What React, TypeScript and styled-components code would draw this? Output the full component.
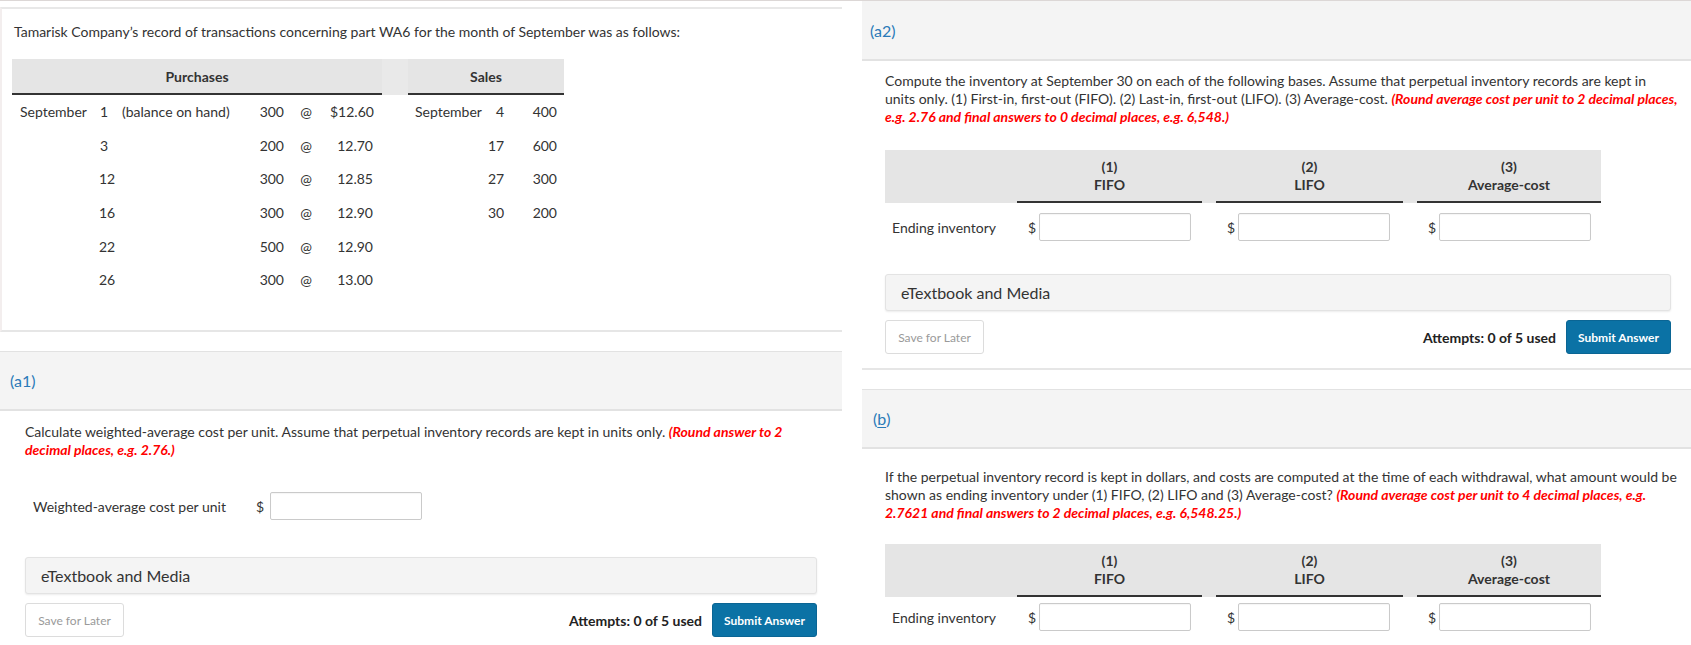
import styled, { createGlobalStyle } from "styled-components"

const GlobalStyle = createGlobalStyle`
  html, body {
    margin: 0;
    padding: 0;
    background: #ffffff;
    overflow: hidden;
  }
  body {
    font-family: Lato, "Open Sans", "Liberation Sans", Arial, sans-serif;
    font-size: 14px;
    color: #333333;
  }
  * {
    box-sizing: border-box;
  }
`

const Page = styled.div`
  display: flex;
  gap: 20px;
  width: 1691px;
  height: 645px;
  overflow: hidden;
  border-top: 1px solid #dcd7d6;
`

const Column = styled.div<{ $width?: number }>`
  display: flex;
  flex-direction: column;
  flex: ${({ $width }) => ($width ? `0 0 ${$width}px` : "1 1 auto")};
  min-width: 0;
`

const Problem = styled.section`
  margin-top: 6px;
  border-top: 2px solid #e8e8e8;
  border-bottom: 2px solid #e6e6e6;
  border-left: 2px solid #f3eeee;
  padding: 13px 12px 0 10px;
  height: 325px;
`

const Intro = styled.p`
  margin: 0 0 0 2px;
  font-size: 14px;
  line-height: 20px;
`

const LedgerTable = styled.table`
  margin-top: 17px;
  border-collapse: separate;
  border-spacing: 0;
  table-layout: fixed;
  width: 552px;
`

const Col = styled.col<{ $w: number }>`
  width: ${({ $w }) => $w}px;
`

const LedgerHead = styled.th<{ $blank?: boolean }>`
  height: 36px;
  padding: 0;
  font-weight: 700;
  font-size: 14px;
  text-align: center;
  background: ${({ $blank }) => ($blank ? "#e9e9e9" : "#e5e5e5")};
  border-bottom: 2px solid ${({ $blank }) => ($blank ? "#e9e9e9" : "#333333")};
`

const LedgerCell = styled.td<{ $align?: "left" | "right" | "center"; $pad?: number }>`
  height: 33.6px;
  padding: 0 ${({ $pad }) => $pad ?? 7}px;
  text-align: ${({ $align }) => $align ?? "left"};
  white-space: nowrap;
  font-size: 14px;
  vertical-align: middle;
`

const Part = styled.section<{ $gap?: number; $closed?: boolean }>`
  margin-top: ${({ $gap }) => $gap ?? 0}px;
  border-bottom: ${({ $closed }) => ($closed ? "2px solid #e6e6e6" : "none")};
  padding-bottom: ${({ $closed }) => ($closed ? 14 : 0)}px;
`

const PartHeader = styled.div<{ $top?: boolean; $indent?: number }>`
  height: 60px;
  display: flex;
  align-items: center;
  padding-left: ${({ $indent }) => $indent ?? 10}px;
  background: #f4f4f4;
  border-top: ${({ $top }) => ($top ? "1px solid #e2e2e2" : "none")};
  border-bottom: 2px solid #e2e2e2;
  font-size: 16px;
  color: #2a7ab8;
`

const PartLink = styled.span`
  text-decoration: underline;
  text-underline-offset: 2px;
`

const PartBody = styled.div<{ $left: number; $right: number; $top?: number }>`
  padding: ${({ $top }) => $top ?? 12}px ${({ $right }) => $right}px 0 ${({ $left }) => $left}px;
`

const Question = styled.p`
  margin: 0;
  font-size: 14px;
  line-height: 18px;
  white-space: nowrap;
`

const Hint = styled.em`
  color: #ff0000;
  font-weight: 700;
  font-style: italic;
`

const AnswerRow = styled.div`
  display: flex;
  align-items: center;
  margin-top: 33px;
`

const AnswerLabel = styled.span`
  width: 231px;
  padding-left: 8px;
  font-size: 14px;
`

const Dollar = styled.span<{ $w?: number }>`
  width: ${({ $w }) => $w ?? 14}px;
  font-size: 14px;
`

const AnswerInput = styled.input`
  width: 152px;
  height: 28px;
  border: 1px solid #cacaca;
  border-radius: 2px;
  background: #ffffff;
  box-shadow: inset 0 1px 1px rgba(0, 0, 0, 0.04);
  padding: 0 6px;
  font: inherit;
`

const MethodTable = styled.table<{ $gap: number }>`
  margin-top: ${({ $gap }) => $gap}px;
  border-collapse: separate;
  border-spacing: 0;
  table-layout: fixed;
  width: 716px;
`

const MethodHead = styled.th<{ $method?: boolean }>`
  padding: 8px 0 7px;
  background: #e5e5e5;
  font-size: 14px;
  font-weight: 700;
  line-height: 18px;
  text-align: center;
  border-bottom: 2px solid ${({ $method }) => ($method ? "#333333" : "#e5e5e5")};
`

const MethodCell = styled.td<{ $pad: number }>`
  padding: ${({ $pad }) => $pad}px 0 10px;
  vertical-align: middle;
`

const RowLabel = styled.span`
  padding-left: 7px;
  font-size: 14px;
  white-space: nowrap;
`

const Amount = styled.div`
  display: flex;
  align-items: center;
  padding-left: 11px;
`

const MediaBox = styled.div<{ $gap: number }>`
  margin-top: ${({ $gap }) => $gap}px;
  height: 37px;
  display: flex;
  align-items: center;
  padding-left: 15px;
  background: #f4f4f4;
  border: 1px solid #e3e3e3;
  border-radius: 3px;
  box-shadow: 0 1px 2px rgba(0, 0, 0, 0.08);
  font-size: 16px;
`

const Actions = styled.div`
  display: flex;
  align-items: center;
  margin-top: 9px;
`

const SaveButton = styled.button`
  width: 99px;
  height: 34px;
  background: #ffffff;
  border: 1px solid #dcdcdc;
  border-radius: 3px;
  color: #9a9a9a;
  font-family: inherit;
  font-size: 12px;
`

const Attempts = styled.span`
  margin-left: auto;
  margin-right: 10px;
  font-size: 14px;
  font-weight: 700;
  color: #222222;
`

const SubmitButton = styled.button`
  width: 105px;
  height: 34px;
  background: #0b72a5;
  border: 1px solid #0a6594;
  border-radius: 3px;
  color: #ffffff;
  font-family: inherit;
  font-size: 12px;
  font-weight: 700;
`

type Purchase = { month?: string; day: string; note?: string; qty: string; price: string }
type Sale = { month?: string; day: string; qty: string }

const purchases: Purchase[] = [
  { month: "September", day: "1", note: "(balance on hand)", qty: "300", price: "$12.60" },
  { day: "3", qty: "200", price: "12.70" },
  { day: "12", qty: "300", price: "12.85" },
  { day: "16", qty: "300", price: "12.90" },
  { day: "22", qty: "500", price: "12.90" },
  { day: "26", qty: "300", price: "13.00" },
]

const sales: Sale[] = [
  { month: "September", day: "4", qty: "400" },
  { day: "17", qty: "600" },
  { day: "27", qty: "300" },
  { day: "30", qty: "200" },
]

const methods = [
  { n: "(1)", name: "FIFO" },
  { n: "(2)", name: "LIFO" },
  { n: "(3)", name: "Average-cost" },
]

const Ledger = () => (
  <LedgerTable>
    <colgroup>
      <Col $w={80} />
      <Col $w={23} />
      <Col $w={124} />
      <Col $w={52} />
      <Col $w={30} />
      <Col $w={61} />
      <Col $w={26} />
      <Col $w={73} />
      <Col $w={30} />
      <Col $w={13} />
      <Col $w={40} />
    </colgroup>
    <thead>
      <tr>
        <LedgerHead colSpan={6}>Purchases</LedgerHead>
        <LedgerHead $blank />
        <LedgerHead colSpan={4}>Sales</LedgerHead>
      </tr>
    </thead>
    <tbody>
      {purchases.map((p, i) => {
        const s = sales[i]
        return (
          <tr key={p.day}>
            <LedgerCell $pad={8}>{p.month}</LedgerCell>
            <LedgerCell $align="right" $pad={7}>{p.day}</LedgerCell>
            <LedgerCell>{p.note}</LedgerCell>
            <LedgerCell $align="right">{p.qty}</LedgerCell>
            <LedgerCell $align="center" $pad={0}>@</LedgerCell>
            <LedgerCell $align="right" $pad={9}>{p.price}</LedgerCell>
            <LedgerCell />
            <LedgerCell>{s?.month}</LedgerCell>
            <LedgerCell $align="right">{s?.day}</LedgerCell>
            <LedgerCell />
            <LedgerCell $align="right">{s?.qty}</LedgerCell>
          </tr>
        )
      })}
    </tbody>
  </LedgerTable>
)

const MethodGrid = ({ gap, rowPad }: { gap: number; rowPad: number }) => (
  <MethodTable $gap={gap}>
    <colgroup>
      <Col $w={132} />
      <Col $w={185} />
      <Col $w={14} />
      <Col $w={187} />
      <Col $w={14} />
      <Col $w={184} />
    </colgroup>
    <thead>
      <tr>
        <MethodHead />
        <MethodHead $method>
          (1)
          <br />
          FIFO
        </MethodHead>
        <MethodHead />
        <MethodHead $method>
          (2)
          <br />
          LIFO
        </MethodHead>
        <MethodHead />
        <MethodHead $method>
          (3)
          <br />
          Average-cost
        </MethodHead>
      </tr>
    </thead>
    <tbody>
      <tr>
        <MethodCell $pad={rowPad}>
          <RowLabel>Ending inventory</RowLabel>
        </MethodCell>
        {methods.map((m, i) => [
          i > 0 ? <MethodCell key={`gap-${m.n}`} $pad={rowPad} /> : null,
          <MethodCell key={m.n} $pad={rowPad}>
            <Amount>
              <Dollar $w={11}>$</Dollar>
              <AnswerInput aria-label={m.name} />
            </Amount>
          </MethodCell>,
        ])}
      </tr>
    </tbody>
  </MethodTable>
)

const Footer = ({ gap }: { gap: number }) => (
  <>
    <MediaBox $gap={gap}>eTextbook and Media</MediaBox>
    <Actions>
      <SaveButton>Save for Later</SaveButton>
      <Attempts>Attempts: 0 of 5 used</Attempts>
      <SubmitButton>Submit Answer</SubmitButton>
    </Actions>
  </>
)

export default function App() {
  return (
    <>
      <GlobalStyle />
      <Page>
        <Column $width={842}>
          <Problem>
            <Intro>
              Tamarisk Company’s record of transactions concerning part WA6 for the month of September was as follows:
            </Intro>
            <Ledger />
          </Problem>
          <Part $gap={19}>
            <PartHeader $top>(a1)</PartHeader>
            <PartBody $left={25} $right={25}>
              <Question>
                Calculate weighted-average cost per unit. Assume that perpetual inventory records are kept in units
                only. <Hint>(Round answer to 2<br />decimal places, e.g. 2.76.)</Hint>
              </Question>
              <AnswerRow>
                <AnswerLabel>Weighted-average cost per unit</AnswerLabel>
                <Dollar>$</Dollar>
                <AnswerInput />
              </AnswerRow>
              <Footer gap={37} />
            </PartBody>
          </Part>
        </Column>
        <Column>
          <Part $closed>
            <PartHeader $indent={8}>(a2)</PartHeader>
            <PartBody $left={23} $right={20} $top={11}>
              <Question>
                Compute the inventory at September 30 on each of the following bases. Assume that perpetual inventory
                records are kept in
                <br />
                units only. (1) First-in, first-out (FIFO). (2) Last-in, first-out (LIFO). (3) Average-cost.{" "}
                <Hint>
                  (Round average cost per unit to 2 decimal places,
                  <br />
                  e.g. 2.76 and final answers to 0 decimal places, e.g. 6,548.)
                </Hint>
              </Question>
              <MethodGrid gap={24} rowPad={10} />
              <Footer gap={23} />
            </PartBody>
          </Part>
          <Part $gap={19}>
            <PartHeader $top $indent={11}>
              (<PartLink>b</PartLink>)
            </PartHeader>
            <PartBody $left={23} $right={20} $top={19}>
              <Question>
                If the perpetual inventory record is kept in dollars, and costs are computed at the time of each
                withdrawal, what amount would be
                <br />
                shown as ending inventory under (1) FIFO, (2) LIFO and (3) Average-cost?{" "}
                <Hint>
                  (Round average cost per unit to 4 decimal places, e.g.
                  <br />
                  2.7621 and final answers to 2 decimal places, e.g. 6,548.25.)
                </Hint>
              </Question>
              <MethodGrid gap={22} rowPad={6} />
            </PartBody>
          </Part>
        </Column>
      </Page>
    </>
  )
}
